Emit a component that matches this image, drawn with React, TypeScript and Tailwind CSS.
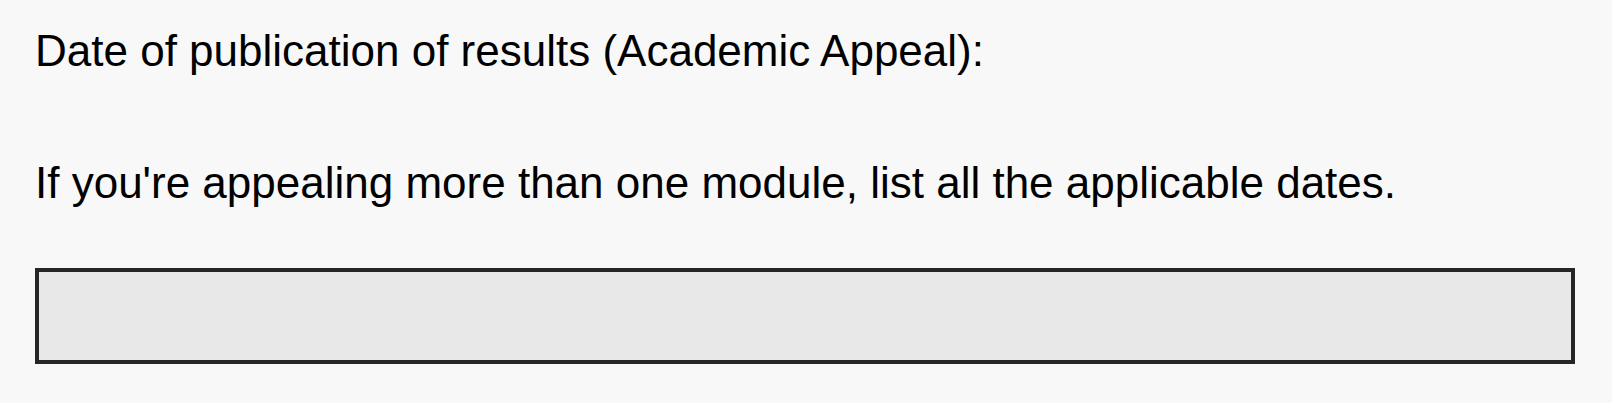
import React from 'react';

export default function App() {
  return (
    <div className="min-h-[403px] w-full bg-[#f8f8f8] pl-[35px] pr-[37px] pt-[25px] font-['Liberation_Sans',Arial,sans-serif] text-black">
      <label htmlFor="pub-date" className="block text-[44px] leading-[52px]">
        Date of publication of results (Academic Appeal):
      </label>
      <p className="mt-[80px] text-[44px] leading-[52px]">
        If you're appealing more than one module, list all the applicable dates.
      </p>
      <input
        id="pub-date"
        type="text"
        className="mt-[59px] block h-[96px] w-full border-4 border-[#262626] bg-[#e8e8e8] px-3 text-[44px] outline-none"
      />
    </div>
  );
}
